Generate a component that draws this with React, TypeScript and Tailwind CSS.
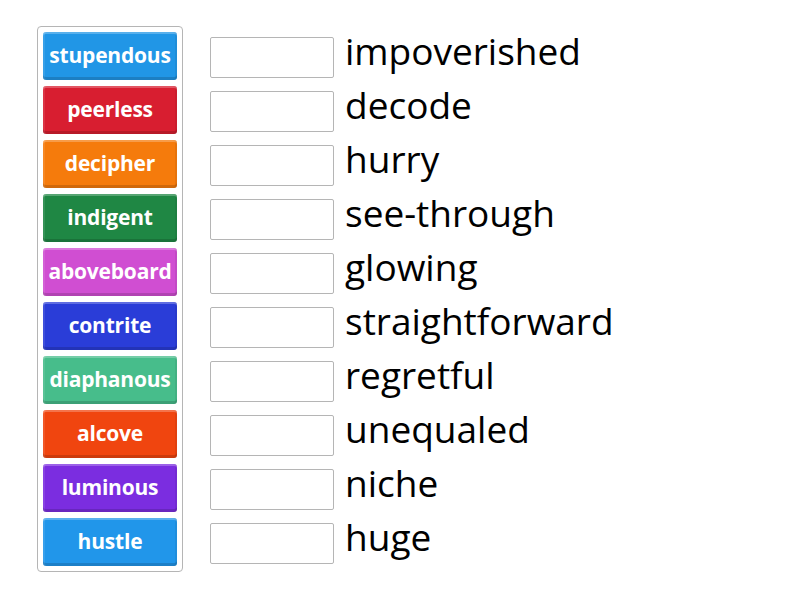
import React from "react";

const tiles: { label: string; bg: string }[] = [
  { label: "stupendous", bg: "bg-[#2196e6]" },
  { label: "peerless", bg: "bg-[#d81e30]" },
  { label: "decipher", bg: "bg-[#f57b0c]" },
  { label: "indigent", bg: "bg-[#1f8744]" },
  { label: "aboveboard", bg: "bg-[#d04ed2]" },
  { label: "contrite", bg: "bg-[#2a3dd8]" },
  { label: "diaphanous", bg: "bg-[#47bd8b]" },
  { label: "alcove", bg: "bg-[#f0450f]" },
  { label: "luminous", bg: "bg-[#7b2de0]" },
  { label: "hustle", bg: "bg-[#2196ea]" },
];

const words = [
  "impoverished",
  "decode",
  "hurry",
  "see-through",
  "glowing",
  "straightforward",
  "regretful",
  "unequaled",
  "niche",
  "huge",
];

export default function App() {
  return (
    <div
      className="w-[800px] h-[600px] bg-white flex items-start"
      style={{ fontFamily: '"Open Sans", "Noto Sans", sans-serif' }}
    >
      <div className="ml-[37px] mt-[26px] w-[146px] border border-[#b5b5b5] rounded-[4px] p-[5px] flex flex-col gap-[6px]">
        {tiles.map((t) => (
          <div
            key={t.label}
            className={`${t.bg} h-[48px] rounded-[3px] flex items-center justify-center text-white font-bold text-[21px] tracking-[-0.2px] shadow-[inset_0_2px_0_rgba(255,255,255,0.25),inset_0_-3px_0_rgba(0,0,0,0.15),inset_2px_0_0_rgba(255,255,255,0.1),inset_-2px_0_0_rgba(0,0,0,0.06)]`}
          >
            <span className="-mt-[1px]">{t.label}</span>
          </div>
        ))}
      </div>
      <div className="ml-[27px] mt-[37px] flex flex-col gap-[14px]">
        {words.map((w) => (
          <div key={w} className="flex items-center h-[40px]">
            <div className="w-[124px] h-[41px] border border-[#b5b5b5] rounded-[2px] bg-white shrink-0" />
            <div className="ml-[11px] text-[37px] leading-none text-black -mt-[14px] whitespace-nowrap">{w}</div>
          </div>
        ))}
      </div>
    </div>
  );
}
